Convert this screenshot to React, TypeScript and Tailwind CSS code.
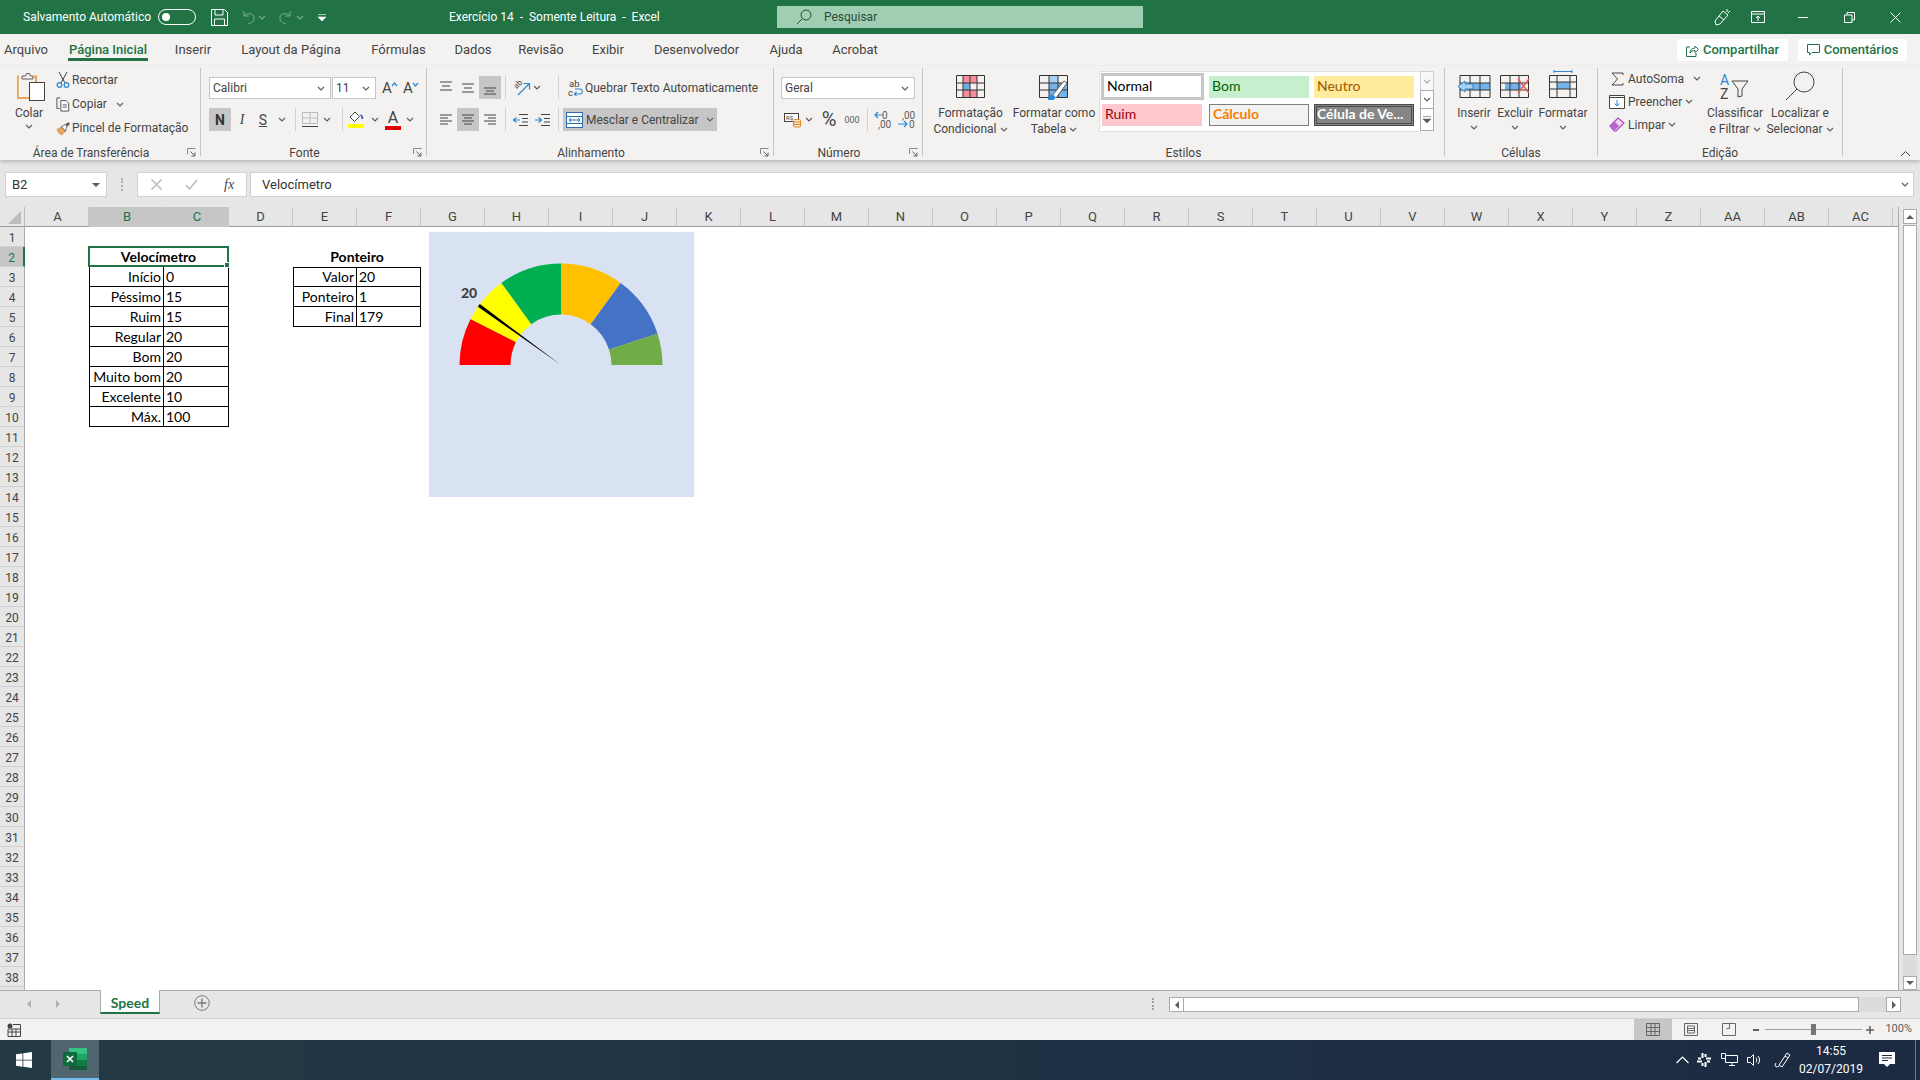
import React from "react";

const columns = ["A","B","C","D","E","F","G","H","I","J","K","L","M","N","O","P","Q","R","S","T","U","V","W","X","Y","Z","AA","AB","AC"];
const rows = Array.from({ length: 38 }, (_, i) => i + 1);

const tabs = [
  { name: "Arquivo", cls: "w-[46px] ml-[3px]" },
  { name: "Página Inicial", cls: "w-[80px] ml-[19px] font-medium text-[#217346] border-b-[3px] border-[#217346]" },
  { name: "Inserir", cls: "w-[36px] ml-[27px]" },
  { name: "Layout da Página", cls: "w-[100px] ml-[30px]" },
  { name: "Fórmulas", cls: "w-[53px] ml-[31px]" },
  { name: "Dados", cls: "w-[38px] ml-[29px]" },
  { name: "Revisão", cls: "w-[44px] ml-[27px]" },
  { name: "Exibir", cls: "w-[32px] ml-[29px]" },
  { name: "Desenvolvedor", cls: "w-[87px] ml-[29px]" },
  { name: "Ajuda", cls: "w-[32px] ml-[30px]" },
  { name: "Acrobat", cls: "w-[46px] ml-[30px]" },
];

const velocimetro = [
  { label: "Início", value: "0", left: "col-start-2 row-start-3", right: "col-start-3 row-start-3" },
  { label: "Péssimo", value: "15", left: "col-start-2 row-start-4", right: "col-start-3 row-start-4" },
  { label: "Ruim", value: "15", left: "col-start-2 row-start-5", right: "col-start-3 row-start-5" },
  { label: "Regular", value: "20", left: "col-start-2 row-start-6", right: "col-start-3 row-start-6" },
  { label: "Bom", value: "20", left: "col-start-2 row-start-7", right: "col-start-3 row-start-7" },
  { label: "Muito bom", value: "20", left: "col-start-2 row-start-8", right: "col-start-3 row-start-8" },
  { label: "Excelente", value: "10", left: "col-start-2 row-start-9", right: "col-start-3 row-start-9" },
  { label: "Máx.", value: "100", left: "col-start-2 row-start-10", right: "col-start-3 row-start-10" },
];

const ponteiro = [
  { label: "Valor", value: "20", left: "col-start-5 row-start-3 border-t pb-px", right: "col-start-6 row-start-3 border-t pb-px" },
  { label: "Ponteiro", value: "1", left: "col-start-5 row-start-4", right: "col-start-6 row-start-4" },
  { label: "Final", value: "179", left: "col-start-5 row-start-5", right: "col-start-6 row-start-5" },
];

const gauge = [
  { from: 0, to: 27, color: "#ff0000" },
  { from: 27, to: 54, color: "#ffff00" },
  { from: 54, to: 90, color: "#00b050" },
  { from: 90, to: 126, color: "#ffc000" },
  { from: 126, to: 162, color: "#4472c4" },
  { from: 162, to: 180, color: "#70ad47" },
];

function slice(from: number, to: number, inner: number, outer: number) {
  const cx = 132;
  const cy = 133;
  const pt = (deg: number, r: number) => {
    const a = (deg * Math.PI) / 180;
    return `${(cx - r * Math.cos(a)).toFixed(2)} ${(cy - r * Math.sin(a)).toFixed(2)}`;
  };
  return `M${pt(from, outer)}A${outer} ${outer} 0 0 1 ${pt(to, outer)}L${pt(to, inner)}A${inner} ${inner} 0 0 0 ${pt(from, inner)}Z`;
}

function Chevron({ color = "#605e5c" }: { color?: string }) {
  return (
    <svg width="8" height="5" viewBox="0 0 8 5" className="shrink-0">
      <path d="M1 1l3 3 3-3" fill="none" stroke={color} strokeWidth="1.2" />
    </svg>
  );
}

function Launcher() {
  return (
    <svg width="9" height="9" viewBox="0 0 9 9">
      <path d="M.5 6V.5H8.5" fill="none" stroke="#8a8886" />
      <path d="M3.5 3.5l4 4M8 4.5V8H4.5" fill="none" stroke="#605e5c" />
    </svg>
  );
}

function Lines({ lines }: { lines: number[][] }) {
  return (
    <svg width="16" height="16" viewBox="0 0 16 16">
      {lines.map((l, i) => (
        <path key={i} d={`M${l[0]} ${l[2]}H${l[1]}`} stroke="#444" strokeWidth="1" />
      ))}
    </svg>
  );
}

function Group({ width, label, launcher, children }: { width: string; label: string; launcher?: boolean; children: React.ReactNode }) {
  return (
    <>
      <div className={`${width} h-[94px] flex flex-col shrink-0`}>
        <div className="h-[78px] flex">{children}</div>
        <div className="h-[16px] pt-px flex items-center">
          <div className={`flex-1 text-center ${launcher ? "pr-[18px]" : ""}`}>{label}</div>
          {launcher && (
            <div className="w-[18px] flex justify-center -ml-[18px]">
              <Launcher />
            </div>
          )}
        </div>
      </div>
      <div className="mt-[2px] h-[88px] w-px bg-[#c8c6c4] shrink-0" />
    </>
  );
}

function Sep() {
  return <div className="w-px h-[23px] bg-[#d2d0ce] shrink-0" />;
}

function PasteIcon() {
  return (
    <svg width="30" height="30" viewBox="0 0 30 30">
      <path d="M2 4.5H0.8V26H12M17 4.5H19V10" fill="none" stroke="#eaa357" strokeWidth="2" />
      <path d="M5 7V4h3.5l1-2.500h3l1 2.500H16v3z" fill="#f3f2f1" stroke="#605e5c" />
      <rect x="12.500" y="10.500" width="15" height="18" fill="#fff" stroke="#444" />
    </svg>
  );
}

function ScissorsIcon() {
  return (
    <svg width="14" height="18" viewBox="0 0 14 18">
      <path d="M3 1l6 11M11 1L5 12" stroke="#444" strokeWidth="1" fill="none" />
      <circle cx="3.500" cy="14" r="2.300" fill="none" stroke="#2b88d8" strokeWidth="1.300" />
      <circle cx="10.500" cy="14" r="2.300" fill="none" stroke="#2b88d8" strokeWidth="1.300" />
    </svg>
  );
}

function CopyIcon() {
  return (
    <svg width="14" height="15" viewBox="0 0 16 16">
      <path d="M5 .5H1v12h3" fill="none" stroke="#444" />
      <path d="M5.500 3.500h6l3 3v9h-9zM7.500 8.500h5M7.500 11h5" fill="#fff" stroke="#444" />
    </svg>
  );
}

function BrushIcon() {
  return (
    <svg width="15" height="15" viewBox="0 0 16 16">
      <path d="M1 9l5-3 4 5-4 4C4 14 2 12 1 9z" fill="#eaa357" stroke="#c97f2c" strokeWidth=".6" />
      <path d="M6 6l4-2.500 1.500 2L10 11z" fill="#fff" stroke="#444" strokeWidth=".8" />
      <path d="M10 4l3-3 2 2-3 3z" fill="#605e5c" />
    </svg>
  );
}

function GrowIcon({ up }: { up: boolean }) {
  return (
    <div className="w-[20px] h-[22px] flex items-center text-[15px] text-[#444]">
      A
      <svg width="7" height="5" viewBox="0 0 7 5" className="ml-[-1px] mb-[8px]">
        <path d={up ? "M1 4l2.500-3L6 4" : "M1 1l2.500 3L6 1"} fill="none" stroke="#2b88d8" strokeWidth="1.200" />
      </svg>
    </div>
  );
}

function BorderIcon() {
  return (
    <svg width="16" height="16" viewBox="0 0 16 16">
      <path d="M.5 .5h15v11H.5zM8 .5v11M.5 6h15" fill="none" stroke="#bdbbb9" />
      <path d="M0 14.500h16" stroke="#444" />
    </svg>
  );
}

function FillIcon() {
  return (
    <svg width="16" height="18" viewBox="0 0 16 18">
      <path d="M7 1l-5 5 4.500 4.500 5-5z" fill="#fff" stroke="#444" />
      <path d="M12.500 4c1.500.5 2 2 1.800 4" fill="none" stroke="#2b579a" strokeWidth="1.600" />
      <rect x="0" y="13" width="16" height="4" fill="#ffff00" />
    </svg>
  );
}

function FontColorIcon() {
  return (
    <div className="w-[16px] h-[20px] flex flex-col items-center">
      <span className="text-[16px] leading-[15px] text-[#444]">A</span>
      <span className="w-[16px] h-[4px] bg-[#e00000] mt-[1px]" />
    </div>
  );
}

function OrientIcon() {
  return (
    <svg width="18" height="18" viewBox="0 0 18 18" className="overflow-visible">
      <text x="1" y="8" fontSize="8" fill="#444" transform="rotate(-45 5 6)">ab</text>
      <path d="M5 16L16 5M10.500 4.500H16.500V10.500" fill="none" stroke="#2b88d8" strokeWidth="1.200" />
    </svg>
  );
}

function WrapIcon() {
  return (
    <svg width="16" height="18" viewBox="0 0 16 18" className="overflow-visible">
      <text x="1" y="8" fontSize="9.500" fill="#444">ab</text>
      <text x="0" y="17" fontSize="9.500" fill="#444">c</text>
      <path d="M7 15h5c3 0 3-5 0-5H7M8.500 13L6.500 15l2 2" fill="none" stroke="#2b88d8" strokeWidth="1.100" />
    </svg>
  );
}

function IndentIcon({ reverse }: { reverse?: boolean }) {
  return (
    <svg width="16" height="14" viewBox="0 0 16 14">
      <path d="M7 1.500h9M10 5.500h6M10 9h6M7 12.500h9" stroke="#444" fill="none" />
      <path d={reverse ? "M1 7h6M4.500 4.500L7.500 7l-3 2.500" : "M2 7h6M4.500 4.500L1.500 7l3 2.500"} stroke="#2b88d8" strokeWidth="1.200" fill="none" />
    </svg>
  );
}

function MergeIcon() {
  return (
    <svg width="17" height="16" viewBox="0 0 17 16">
      <rect x=".5" y=".5" width="16" height="15" fill="#fff" stroke="#2b6cb0" />
      <path d="M.5 4.500h16M.5 11.500h16" stroke="#2b6cb0" />
      <path d="M3 8h11M5 6L3 8l2 2M12 6l2 2-2 2" stroke="#2b6cb0" fill="none" />
    </svg>
  );
}

function AccountingIcon() {
  return (
    <svg width="18" height="17" viewBox="0 0 18 17" className="overflow-visible">
      <rect x=".5" y="2.500" width="14" height="8" fill="#fff" stroke="#444" />
      <text x="2" y="9" fontSize="6" fill="#444">R$</text>
      <rect x="9.500" y="8.500" width="7" height="7.500" rx="1" fill="#fde3c8" stroke="#e8862a" />
      <path d="M9.500 11h7M9.500 13.500h7" stroke="#e8862a" />
    </svg>
  );
}

function DecimalIcon({ more }: { more?: boolean }) {
  return (
    <div className="relative w-[22px] h-[22px] text-[10px] leading-[9px] text-[#605e5c]">
      {more ? (
        <>
          <span className="absolute left-[9px] top-[2px]">0</span>
          <span className="absolute left-[5px] top-[11px]">,00</span>
          <svg width="10" height="10" viewBox="0 0 10 10" className="absolute left-[1px] top-[1px]">
            <path d="M9 5H1M4 2L1 5l3 3" fill="none" stroke="#2b88d8" strokeWidth="1.200" />
          </svg>
        </>
      ) : (
        <>
          <span className="absolute left-[7px] top-[2px]">,00</span>
          <span className="absolute left-[14px] top-[11px]">0</span>
          <svg width="12" height="10" viewBox="0 0 12 10" className="absolute left-[2px] top-[10px]">
            <path d="M1 5h9M7 2l3 3-3 3" fill="none" stroke="#2b88d8" strokeWidth="1.200" />
          </svg>
        </>
      )}
    </div>
  );
}

function CondIcon() {
  return (
    <svg width="29" height="23" viewBox="0 0 29 23">
      <rect x="7" y="1" width="14" height="7" fill="#f58d99" />
      <rect x="7" y="8" width="7" height="7" fill="#6daee8" />
      <rect x="7" y="15" width="14" height="7" fill="#f58d99" />
      <path d="M.5 .5h28v22H.5zM.5 8h28M.5 15h28M7 .5v22M14 .5v22M21 .5v22" fill="none" stroke="#333" />
    </svg>
  );
}

function TableIcon() {
  return (
    <svg width="30" height="26" viewBox="0 0 30 26">
      <rect x="10" y="8" width="19" height="14" fill="#74b3ea" />
      <rect x="10" y="1" width="9" height="7" fill="#a9d0f2" />
      <path d="M.5 .5h28v22H.5zM.5 8h28M.5 15h28M10 .5v22M19 .5v22" fill="none" stroke="#333" />
      <path d="M13 21L25 6l3 2-11 15" fill="#fff" stroke="#605e5c" />
      <path d="M9 25c0-3 2-6 5-5s3 4 0 5z" fill="#2b88d8" />
    </svg>
  );
}

function InsertIcon() {
  return (
    <svg width="33" height="23" viewBox="0 0 33 23">
      <rect x="11" y="8" width="21" height="7" fill="#74b3ea" />
      <path d="M2 .5h30v22H2zM2 8h30M2 15h30M12 .5v22M22 .5v22" fill="none" stroke="#333" />
      <path d="M0 11.500L7 6v3h8v5H7v3z" fill="#a9d0f2" stroke="#2b88d8" />
    </svg>
  );
}

function DeleteIcon() {
  return (
    <svg width="30" height="23" viewBox="0 0 30 23">
      <rect x="5" y="8" width="16" height="7" fill="#74b3ea" />
      <path d="M.5 .5h28v22H.5zM.5 8h28M.5 15h28M10 .5v22M19 .5v22" fill="none" stroke="#333" />
      <path d="M18 4l11 14M29 4L18 18" stroke="#e85c5c" strokeWidth="1.600" />
    </svg>
  );
}

function FormatIcon() {
  return (
    <svg width="28" height="28" viewBox="0 0 28 28">
      <path d="M5 1.500h18M5 0v3M23 0v3" stroke="#2b88d8" fill="none" />
      <rect x="8" y="12" width="13" height="7" fill="#74b3ea" />
      <path d="M.5 5.500h27v22H.5zM.5 12h27M.5 19h27M8 5.500v22M21 5.500v22" fill="none" stroke="#333" />
    </svg>
  );
}

function SortIcon() {
  return (
    <svg width="30" height="28" viewBox="0 0 30 28" className="overflow-visible">
      <text x="0" y="13" fontSize="14" fill="#2b88d8">A</text>
      <text x="0" y="27" fontSize="14" fill="#444">Z</text>
      <path d="M12 9h16l-6 8v7l-4 1v-8z" fill="none" stroke="#444" />
    </svg>
  );
}

function FindIcon() {
  return (
    <svg width="30" height="30" viewBox="0 0 30 30">
      <circle cx="19" cy="11" r="10" fill="none" stroke="#444" />
      <path d="M12 18L1 29" stroke="#444" />
    </svg>
  );
}

function LargeButton({ width, pt, icon, children }: { width: string; pt: string; icon: React.ReactNode; children: React.ReactNode }) {
  return (
    <div className={`${width} ${pt} flex flex-col items-center shrink-0`}>
      {icon}
      {children}
    </div>
  );
}

function StyleCell({ cls, children }: { cls: string; children: React.ReactNode }) {
  return <div className={`flex items-center pl-[3px] text-[14px] overflow-hidden whitespace-nowrap [font-family:Lato,sans-serif] ${cls}`}>{children}</div>;
}

function Cell({ cls, children }: { cls: string; children: React.ReactNode }) {
  return <div className={`flex items-center border-black whitespace-nowrap ${cls}`}>{children}</div>;
}

function ScrollButton({ cls, children }: { cls: string; children?: React.ReactNode }) {
  return <div className={`flex items-center justify-center bg-white border border-[#ababab] ${cls}`}>{children}</div>;
}

function Triangle({ dir }: { dir: "up" | "down" | "left" | "right" }) {
  const d = { up: "M0 5l4-4 4 4z", down: "M0 1l4 4 4-4z", left: "M5 0L1 4l4 4z", right: "M1 0l4 4-4 4z" }[dir];
  return (
    <svg width={dir === "up" || dir === "down" ? 8 : 6} height={dir === "up" || dir === "down" ? 6 : 8} viewBox={dir === "up" || dir === "down" ? "0 0 8 6" : "0 0 6 8"}>
      <path d={d} fill="#605e5c" />
    </svg>
  );
}

function TitleBar() {
  return (
    <div className="h-[34px] shrink-0 bg-[#217346] flex items-center text-white text-[12px]">
      <div className="ml-[23px] w-[135px]">Salvamento Automático</div>
      <div className="w-[38px] h-[16px] rounded-full border border-white flex items-center pl-[3px]">
        <div className="w-[8px] h-[8px] rounded-full bg-white" />
      </div>
      <svg width="17" height="17" viewBox="0 0 17 17" className="ml-[15px]">
        <path d="M.5 .5h13l3 3v13H.5zM4 .5V6h8V.5M3.500 16.500V10h10v6.500" fill="none" stroke="#fff" />
      </svg>
      <svg width="16" height="15" viewBox="0 0 16 15" className="ml-[12px] opacity-40">
        <path d="M4 1v5h5M4 6c3-4 11-3 10 3-.5 3-3 4-6 5" fill="none" stroke="#fff" />
      </svg>
      <div className="ml-[2px] opacity-40"><Chevron color="#fff" /></div>
      <svg width="16" height="15" viewBox="0 0 16 15" className="ml-[12px] opacity-40">
        <path d="M12 1v5H7M12 6C9 2 1 3 2 9c.5 3 3 4 6 5" fill="none" stroke="#fff" />
      </svg>
      <div className="ml-[2px] opacity-40"><Chevron color="#fff" /></div>
      <svg width="8" height="9" viewBox="0 0 8 9" className="ml-[14px]">
        <path d="M0 1.500h8M0 4l4 4 4-4z" fill="#fff" stroke="#fff" strokeWidth=".6" />
      </svg>
      <div className="w-[209px] ml-[123px] whitespace-pre text-center">Exercício 14  -  Somente Leitura  -  Excel</div>
      <div className="ml-[119px] w-[366px] h-[22px] bg-[#9fceb2] flex items-center text-[#2d4a3a]">
        <svg width="16" height="16" viewBox="0 0 16 16" className="ml-[19px]">
          <circle cx="10" cy="6" r="5" fill="none" stroke="#2d4a3a" />
          <path d="M6.500 9.500L1 15" stroke="#2d4a3a" />
        </svg>
        <span className="ml-[12px]">Pesquisar</span>
      </div>
      <svg width="18" height="18" viewBox="0 0 18 18" className="ml-[570px]">
        <path d="M2 13L10 3l5 4-8 9-4 1zM6 8l5 4M14 1v3M17 3l-2 2" fill="none" stroke="#fff" />
      </svg>
      <svg width="14" height="12" viewBox="0 0 14 12" className="ml-[20px]">
        <path d="M.5 .5h13v11H.5zM.5 3h13M7 10V5M5 7l2-2 2 2" fill="none" stroke="#fff" />
      </svg>
      <div className="ml-[33px] w-[10px] h-px bg-white" />
      <svg width="11" height="11" viewBox="0 0 11 11" className="ml-[36px]">
        <path d="M.5 3h7.500v7.500H.5zM3 3V.5h7.500V8H8" fill="none" stroke="#fff" />
      </svg>
      <svg width="11" height="11" viewBox="0 0 11 11" className="ml-[35px]">
        <path d="M.5 .5l10 10M10.500 .5l-10 10" stroke="#fff" />
      </svg>
    </div>
  );
}

function TabsRow() {
  return (
    <div className="h-[32px] shrink-0 bg-[#f3f2f1] flex items-center text-[13px] text-[#444]">
      {tabs.map((t) => (
        <div key={t.name} className={`h-[22px] flex items-start justify-center whitespace-nowrap leading-[22px] ${t.cls}`}>
          {t.name}
        </div>
      ))}
      <div className="flex-1" />
      <div className="w-[111px] h-[22px] bg-white flex items-center justify-center gap-[4px] text-[13px] font-medium text-[#217346] rounded-[2px]">
        <svg width="13" height="13" viewBox="0 0 13 13">
          <path d="M4 3H.5v9.500h9.500V9M4 9c0-3 2-5 5-5V2l3.500 3.500L9 8.500V6.500C7 6.500 5 7 4 9z" fill="none" stroke="#217346" />
        </svg>
        Compartilhar
      </div>
      <div className="ml-[10px] mr-[13px] w-[109px] h-[22px] bg-white flex items-center justify-center gap-[4px] text-[13px] font-medium text-[#217346] rounded-[2px]">
        <svg width="13" height="12" viewBox="0 0 13 12">
          <path d="M.5 .5h12v8H5L2.500 11V8.500h-2z" fill="none" stroke="#217346" />
        </svg>
        Comentários
      </div>
    </div>
  );
}

function Ribbon() {
  return (
    <div className="relative z-10 h-[94px] shrink-0 bg-[#f3f2f1] flex text-[12px] leading-[16px] text-[#444] shadow-[0_2px_4px_rgba(0,0,0,0.2)]">
      <Group width="w-[200px]" label="Área de Transferência" launcher>
        <LargeButton width="w-[58px]" pt="pt-[6px]" icon={<div className="ml-[5px]"><PasteIcon /></div>}>
          <div className="mt-[3px]">Colar</div>
          <div className="mt-[3px]"><Chevron /></div>
        </LargeButton>
        <div className="-ml-[2px] pt-[2px] flex flex-col">
          <div className="h-[24px] flex items-center">
            <div className="w-[16px]"><ScissorsIcon /></div>Recortar
          </div>
          <div className="h-[24px] flex items-center">
            <div className="w-[16px]"><CopyIcon /></div>Copiar
            <div className="ml-[9px]"><Chevron /></div>
          </div>
          <div className="h-[24px] flex items-center whitespace-nowrap">
            <div className="w-[16px]"><BrushIcon /></div>Pincel de Formatação
          </div>
        </div>
      </Group>

      <Group width="w-[225px]" label="Fonte" launcher>
        <div className="pl-[8px] pt-[11px] flex flex-col">
          <div className="h-[22px] flex items-center">
            <div className="w-[122px] h-[22px] bg-white border border-[#c8c6c4] flex items-center justify-between pl-[3px] pr-[5px]">
              Calibri <Chevron />
            </div>
            <div className="w-[44px] ml-px h-[22px] bg-white border border-[#c8c6c4] flex items-center justify-between pl-[3px] pr-[5px]">
              11 <Chevron />
            </div>
            <div className="ml-[6px] w-[21px]"><GrowIcon up /></div>
            <div className="w-[20px]"><GrowIcon up={false} /></div>
          </div>
          <div className="mt-[9px] h-[23px] flex items-center">
            <div className="w-[22px] h-[23px] bg-[#c6c6c6] flex items-center justify-center font-bold text-[14px] text-[#333]">N</div>
            <div className="w-[22px] text-center italic text-[14px] [font-family:'Liberation_Serif',serif]">I</div>
            <div className="ml-[2px] w-[16px] text-center underline text-[14px]">S</div>
            <div className="w-[22px] flex justify-center"><Chevron /></div>
            <div className="ml-[2px]"><Sep /></div>
            <div className="ml-[6px] w-[16px]"><BorderIcon /></div>
            <div className="w-[18px] flex justify-center"><Chevron /></div>
            <div className="ml-[6px]"><Sep /></div>
            <div className="ml-[5px] w-[16px]"><FillIcon /></div>
            <div className="w-[21px] flex justify-center"><Chevron /></div>
            <FontColorIcon />
            <div className="w-[18px] flex justify-center"><Chevron /></div>
          </div>
        </div>
      </Group>

      <Group width="w-[346px]" label="Alinhamento" launcher>
        <div className="pl-[8px] pt-[10px] flex flex-col">
          <div className="h-[23px] flex items-center">
            <div className="w-[22px] h-[23px] flex items-center justify-center"><Lines lines={[[2, 14, 2], [4, 12, 6], [2, 14, 10]]} /></div>
            <div className="w-[22px] h-[23px] flex items-center justify-center"><Lines lines={[[2, 14, 4], [4, 12, 8], [2, 14, 12]]} /></div>
            <div className="w-[22px] h-[23px] bg-[#c6c6c6] flex items-center justify-center"><Lines lines={[[2, 14, 8], [4, 12, 11], [2, 14, 14]]} /></div>
            <div className="ml-[4px]"><Sep /></div>
            <div className="ml-[4px] w-[24px] flex justify-center"><OrientIcon /></div>
            <div className="w-[6px] flex justify-center"><Chevron /></div>
            <div className="ml-[18px]"><Sep /></div>
            <div className="ml-[9px] w-[17px]"><WrapIcon /></div>
            <div className="whitespace-nowrap">Quebrar Texto Automaticamente</div>
          </div>
          <div className="mt-[9px] h-[23px] flex items-center">
            <div className="w-[22px] h-[23px] flex items-center justify-center"><Lines lines={[[2, 14, 3], [2, 10, 6], [2, 14, 9], [2, 10, 12]]} /></div>
            <div className="w-[22px] h-[23px] bg-[#c6c6c6] flex items-center justify-center"><Lines lines={[[2, 14, 3], [4, 12, 6], [2, 14, 9], [4, 12, 12]]} /></div>
            <div className="w-[22px] h-[23px] flex items-center justify-center"><Lines lines={[[2, 14, 3], [6, 14, 6], [2, 14, 9], [6, 14, 12]]} /></div>
            <div className="ml-[4px]"><Sep /></div>
            <div className="ml-[3px] w-[22px] flex justify-center"><IndentIcon /></div>
            <div className="w-[22px] flex justify-center"><IndentIcon reverse /></div>
            <div className="ml-[5px]"><Sep /></div>
            <div className="ml-[4px] w-[154px] h-[23px] bg-[#c6c6c6] flex items-center pl-[3px] whitespace-nowrap">
              <MergeIcon />
              <span className="ml-[3px]">Mesclar e Centralizar</span>
              <div className="ml-[7px]"><Chevron /></div>
            </div>
          </div>
        </div>
      </Group>

      <Group width="w-[148px]" label="Número" launcher>
        <div className="pl-[7px] pt-[11px] flex flex-col">
          <div className="w-[134px] h-[22px] bg-white border border-[#c8c6c4] flex items-center justify-between pl-[3px] pr-[5px]">
            Geral <Chevron />
          </div>
          <div className="mt-[9px] h-[23px] flex items-center">
            <div className="ml-[3px] w-[18px]"><AccountingIcon /></div>
            <div className="w-[14px] flex justify-center"><Chevron /></div>
            <div className="w-[26px] text-center text-[20px] leading-[23px] text-[#444]">%</div>
            <div className="w-[20px] text-center text-[9px] text-[#605e5c]">000</div>
            <div className="ml-[5px]"><Sep /></div>
            <div className="ml-[5px]"><DecimalIcon more /></div>
            <DecimalIcon />
          </div>
        </div>
      </Group>

      <Group width="w-[521px]" label="Estilos">
        <div className="ml-[6px] flex">
          <LargeButton width="w-[83px]" pt="pt-[9px]" icon={<CondIcon />}>
            <div className="mt-[7px] whitespace-nowrap">Formatação</div>
            <div className="flex items-center gap-[3px] whitespace-nowrap">Condicional <Chevron /></div>
          </LargeButton>
          <LargeButton width="w-[84px]" pt="pt-[9px]" icon={<TableIcon />}>
            <div className="mt-[4px] whitespace-nowrap">Formatar como</div>
            <div className="flex items-center gap-[3px] whitespace-nowrap">Tabela <Chevron /></div>
          </LargeButton>
        </div>
        <div className="ml-[3px] mt-[5px] w-[321px] h-[61px] bg-white border-y border-l border-[#e1dfdd] pl-[1px] pt-[1px] grid grid-cols-[103px_100px_100px] grid-rows-[27px_22px] gap-x-[5px] gap-y-[4px]">
          <StyleCell cls="pb-px border-[3px] border-[#c6c6c6] bg-white text-black">Normal</StyleCell>
          <StyleCell cls="pb-px self-center h-[22px] bg-[#c6efce] text-[#006100]">Bom</StyleCell>
          <StyleCell cls="pb-px self-center h-[22px] bg-[#ffeb9c] text-[#9c5700]">Neutro</StyleCell>
          <StyleCell cls="pb-[2px] ml-[1px] w-[100px] bg-[#ffc7ce] text-[#9c0006]">Ruim</StyleCell>
          <StyleCell cls="pb-[2px] bg-[#f2f2f2] border border-[#7f7f7f] text-[#fa7d00] font-bold">Cálculo</StyleCell>
          <StyleCell cls="pb-[2px] bg-[#868686] border-[3px] border-double border-[#4a4a4a] text-white font-bold !pl-0">Célula de Ve...</StyleCell>
        </div>
        <div className="mt-[5px] w-[14px] h-[61px] flex flex-col">
          <ScrollButton cls="h-[20px] opacity-50"><Chevron /></ScrollButton>
          <ScrollButton cls="h-[19px] -mt-px"><Chevron /></ScrollButton>
          <ScrollButton cls="h-[23px] -mt-px">
            <svg width="8" height="9" viewBox="0 0 8 9"><path d="M0 1.500h8M0 4l4 4 4-4z" fill="#605e5c" stroke="#605e5c" strokeWidth=".6" /></svg>
          </ScrollButton>
        </div>
      </Group>

      <Group width="w-[152px]" label="Células">
        <div className="ml-[7px] flex">
          <LargeButton width="w-[44px]" pt="pt-[9px]" icon={<InsertIcon />}>
            <div className="mt-[7px]">Inserir</div>
            <div className="mt-[4px]"><Chevron /></div>
          </LargeButton>
          <LargeButton width="w-[38px]" pt="pt-[9px]" icon={<DeleteIcon />}>
            <div className="mt-[7px]">Excluir</div>
            <div className="mt-[4px]"><Chevron /></div>
          </LargeButton>
          <LargeButton width="w-[58px]" pt="pt-[4px]" icon={<FormatIcon />}>
            <div className="mt-[7px]">Formatar</div>
            <div className="mt-[4px]"><Chevron /></div>
          </LargeButton>
        </div>
      </Group>

      <Group width="w-[244px]" label="Edição">
        <div className="ml-[11px] w-[95px] pt-[1px] flex flex-col shrink-0">
          <div className="h-[23px] flex items-center whitespace-nowrap">
            <svg width="19" height="14" viewBox="0 0 19 14" className="shrink-0">
              <path d="M13 3V1H2l5.500 6L2 13h11v-2" fill="none" stroke="#444" transform="translate(1 0)" />
            </svg>
            AutoSoma
            <div className="ml-[9px]"><Chevron /></div>
          </div>
          <div className="h-[23px] flex items-center whitespace-nowrap">
            <svg width="19" height="14" viewBox="0 0 19 14" className="shrink-0">
              <path d="M.5 .5h15v13H.5zM.5 2.500h15" fill="#fff" stroke="#444" />
              <path d="M8 5v6M5.500 8.500L8 11l2.500-2.500" fill="none" stroke="#2b88d8" />
            </svg>
            Preencher
            <div className="ml-[3px]"><Chevron /></div>
          </div>
          <div className="h-[23px] flex items-center whitespace-nowrap">
            <svg width="19" height="16" viewBox="0 0 19 16" className="shrink-0">
              <path d="M1 9l8-8 6 5-8 8H5z" fill="#f3d5f5" stroke="#a64dbf" strokeWidth="1.200" />
              <path d="M1 9l4 5 5-5-4-4z" fill="#b565c9" />
            </svg>
            Limpar
            <div className="ml-[3px]"><Chevron /></div>
          </div>
        </div>
        <LargeButton width="w-[62px]" pt="pt-[6px]" icon={<SortIcon />}>
          <div className="mt-[5px] whitespace-nowrap">Classificar</div>
          <div className="flex items-center gap-[3px] whitespace-nowrap">e Filtrar <Chevron /></div>
        </LargeButton>
        <LargeButton width="w-[68px]" pt="pt-[5px]" icon={<FindIcon />}>
          <div className="mt-[4px] whitespace-nowrap">Localizar e</div>
          <div className="flex items-center gap-[3px] whitespace-nowrap">Selecionar <Chevron /></div>
        </LargeButton>
      </Group>

      <div className="flex-1 flex items-end justify-end pr-[9px] pb-[3px]">
        <svg width="11" height="7" viewBox="0 0 11 7"><path d="M1 6l4.500-4.500L10 6" fill="none" stroke="#444" /></svg>
      </div>
    </div>
  );
}

function FormulaBar() {
  return (
    <div className="h-[47px] shrink-0 bg-[#e6e6e6] flex pt-[12px] text-[13px] text-[#333]">
      <div className="ml-[5px] w-[102px] h-[25px] bg-white border border-[#d2d0ce] flex items-center justify-between pl-[6px] pr-[6px]">
        B2 <Triangle dir="down" />
      </div>
      <div className="ml-[14px] w-[3px] h-[13px] mt-[6px] border-l-2 border-dotted border-[#b0aeac]" />
      <div className="ml-[13px] w-[110px] h-[25px] bg-white border border-[#d2d0ce] flex items-center">
        <svg width="11" height="11" viewBox="0 0 11 11" className="ml-[13px]"><path d="M.5 .5l10 10M10.500 .5l-10 10" stroke="#bdbbb9" strokeWidth="1.500" /></svg>
        <svg width="13" height="11" viewBox="0 0 13 11" className="ml-[23px]"><path d="M1 6l3.500 4L12 1" fill="none" stroke="#bdbbb9" strokeWidth="1.500" /></svg>
        <span className="ml-[26px] italic text-[14px] text-[#444] [font-family:'Liberation_Serif',serif]">fx</span>
      </div>
      <div className="ml-[3px] w-[1664px] h-[25px] bg-white border border-[#d2d0ce] flex items-center justify-between pl-[11px] pr-[4px]">
        Velocímetro
        <Chevron />
      </div>
    </div>
  );
}

function Sheet() {
  return (
    <div className="flex-1 min-h-0 flex bg-[#e6e6e6]">
      <div className="w-[1899px] flex flex-col border-r border-[#ababab] overflow-hidden">
        <div className="h-[20px] shrink-0 flex bg-[#e6e6e6] border-b border-[#9c9c9c] text-[13px] text-[#444]">
          <div className="w-[25px] shrink-0 border-r border-[#bdbdbd] flex items-end justify-end pr-[3px] pb-[2px]">
            <svg width="13" height="13" viewBox="0 0 13 13"><path d="M13 0v13H0z" fill="#bdbdbd" /></svg>
          </div>
          {columns.map((c, i) => {
            let cls = "w-[64px] text-[#444]";
            if (c === "A") cls = "w-[64px] text-[#444] pl-[2px]";
            if (c === "B") cls = "w-[75px] bg-[#c6c6c6] text-[#217346] border-b-2 border-[#217346] h-[20px] pl-[2px]";
            if (c === "C") cls = "w-[65px] bg-[#c6c6c6] text-[#217346] border-b-2 border-[#217346] h-[20px] pl-[2px]";
            return (
              <div key={i} className={`${cls} shrink-0 flex items-center justify-center pt-px border-r border-[#c8c8c8]`}>
                {c}
              </div>
            );
          })}
        </div>
        <div className="flex-1 min-h-0 flex bg-white">
          <div className="w-[25px] shrink-0 flex flex-col bg-[#e6e6e6] border-r border-[#ababab] text-[12px] text-[#444]">
            {rows.map((r) => (
              <div
                key={r}
                className={`h-[20px] shrink-0 flex items-center justify-center pt-[2px] border-b border-[#d0d0d0] ${r === 2 ? "bg-[#c6c6c6] text-[#217346] -mr-px border-r-2 border-r-[#217346]" : ""}`}
              >
                {r}
              </div>
            ))}
          </div>
          <div className="relative grid grid-cols-[64px_75px_65px_64px_repeat(25,64px)] grid-rows-[repeat(38,20px)] text-[14px] leading-[19px] text-black [font-family:Lato,sans-serif]">
            <div className="relative col-start-2 col-span-2 row-start-2 -mt-px -ml-px flex items-center justify-center border-2 border-[#217346] font-bold">
              Velocímetro
              <span className="absolute -right-[3px] -bottom-[3px] w-[6px] h-[6px] bg-[#217346] border border-white" />
            </div>
            {velocimetro.map((r) => (
              <React.Fragment key={r.label}>
                <Cell cls={`${r.left} border-l border-r border-b justify-end pr-[2px]`}>{r.label}</Cell>
                <Cell cls={`${r.right} border-r border-b pl-[2px]`}>{r.value}</Cell>
              </React.Fragment>
            ))}
            <div className="col-start-5 col-span-2 row-start-2 flex items-center justify-center pb-[2px] font-bold">Ponteiro</div>
            {ponteiro.map((r) => (
              <React.Fragment key={r.label}>
                <Cell cls={`${r.left} border-l border-r border-b justify-end pr-[2px]`}>{r.label}</Cell>
                <Cell cls={`${r.right} border-r border-b pl-[2px]`}>{r.value}</Cell>
              </React.Fragment>
            ))}
            <div className="absolute left-[404px] top-[5px] w-[265px] h-[265px] bg-[#d9e2f3]">
              <svg width="265" height="265" viewBox="0 0 265 265">
                {gauge.map((g) => (
                  <path key={g.from} d={slice(g.from, g.to, 50.5, 101.5)} fill={g.color} />
                ))}
                <path d={slice(35.1, 36.9, 0, 101.5)} fill="#000" />
                <text x="32" y="66" fontSize="14" fontWeight="900" fill="#404040" style={{ fontFamily: "Lato, sans-serif" }}>20</text>
              </svg>
            </div>
          </div>
        </div>
      </div>
      <div className="flex-1 flex flex-col pl-[4px] pr-[3px] pt-[2px]">
        <ScrollButton cls="h-[15px] shrink-0"><Triangle dir="up" /></ScrollButton>
        <div className="mt-px h-[730px] shrink-0 bg-white border border-[#ababab]" />
        <div className="flex-1 bg-[#dcdcdc]" />
        <ScrollButton cls="h-[14px] shrink-0"><Triangle dir="down" /></ScrollButton>
      </div>
    </div>
  );
}

function SheetTabs() {
  return (
    <div className="h-[28px] shrink-0 bg-[#e6e6e6] border-t border-[#ababab] flex items-start">
      <div className="ml-[26px] mt-[9px] opacity-40"><Triangle dir="left" /></div>
      <div className="ml-[23px] mt-[9px] opacity-40"><Triangle dir="right" /></div>
      <div className="ml-[39px] -mt-px w-[60px] h-[24px] bg-white border-x border-[#ababab] border-b-2 border-b-[#217346] flex items-center justify-center pt-[2px] text-[14px] font-bold text-[#217346] [font-family:Lato,sans-serif]">
        Speed
      </div>
      <svg width="16" height="16" viewBox="0 0 16 16" className="ml-[34px] mt-[4px]">
        <circle cx="8" cy="8" r="7.300" fill="none" stroke="#7a7a7a" />
        <path d="M3.500 8h9M8 3.500v9" stroke="#7a7a7a" strokeWidth="1.400" />
      </svg>
      <div className="ml-[942px] mt-[7px] w-[2px] h-[12px] border-l-2 border-dotted border-[#a0a0a0]" />
      <div className="ml-[15px] mt-[6px] h-[15px] flex">
        <div className="w-[15px] bg-white border border-[#ababab] flex items-center justify-center"><Triangle dir="left" /></div>
        <div className="w-[675px] bg-white border-y border-r border-[#ababab]" />
        <div className="w-[27px] bg-[#dcdcdc]" />
        <div className="w-[15px] bg-white border border-[#ababab] flex items-center justify-center"><Triangle dir="right" /></div>
      </div>
    </div>
  );
}

function StatusBar() {
  return (
    <div className="h-[22px] shrink-0 bg-[#f3f2f1] border-t border-[#d2d0ce] flex items-center text-[12px] text-[#605e5c]">
      <svg width="14" height="14" viewBox="0 0 14 14" className="ml-[7px]">
        <circle cx="3" cy="3" r="2.500" fill="#444" />
        <path d="M6 1.500h7.500v12H1V6h12.500M1 9h12.500M5 6v7.500M9 6v7.500" fill="none" stroke="#444" />
      </svg>
      <div className="flex-1" />
      <div className="w-[38px] h-[21px] bg-[#c6c6c6] flex items-center justify-center">
        <svg width="14" height="13" viewBox="0 0 14 13"><path d="M.5 .5h13v12H.5zM.5 4.500h13M.5 8.500h13M5 .5v12M9 .5v12" fill="none" stroke="#666" /></svg>
      </div>
      <svg width="14" height="13" viewBox="0 0 14 13" className="ml-[12px]"><path d="M.5 .5h13v12H.5zM3.500 3h7v7h-7zM3.500 5.500h7M3.500 7.500h7" fill="none" stroke="#666" /></svg>
      <svg width="14" height="13" viewBox="0 0 14 13" className="ml-[24px]"><path d="M.5 .5h13v12H.5zM7.500 .5v5h-3" fill="none" stroke="#666" /></svg>
      <div className="ml-[17px] w-[6px] h-[2px] bg-[#605e5c]" />
      <div className="ml-[6px] w-[97px] h-px bg-[#a0a0a0] flex justify-center">
        <div className="-mt-[5px] w-[5px] h-[11px] bg-[#757575]" />
      </div>
      <svg width="8" height="8" viewBox="0 0 8 8" className="ml-[4px]"><path d="M0 4h8M4 0v8" stroke="#605e5c" strokeWidth="1.500" /></svg>
      <div className="ml-[11px] mr-[8px] text-[11px]">100%</div>
    </div>
  );
}

function Taskbar() {
  return (
    <div className="h-[40px] shrink-0 flex items-stretch text-white text-[12px] bg-gradient-to-r from-[#233a45] to-[#1c2a42]">
      <div className="w-[51px] pr-[4px] flex items-center justify-center">
        <svg width="16" height="16" viewBox="0 0 16 16"><path d="M0 2.300l6.500-.9v6.300H0zM7.300 1.300L16 0v7.700H7.300zM0 8.400h6.500v6.300L0 13.800zM7.300 8.400H16V16l-8.700-1.200z" fill="#fff" /></svg>
      </div>
      <div className="w-[48px] bg-[#4f6570] border-b-2 border-[#76b9ed] flex items-center justify-center">
        <svg width="24" height="22" viewBox="0 0 24 22">
          <rect x="6" y="0" width="18" height="6" fill="#33c481" />
          <rect x="6" y="6" width="18" height="6" fill="#21a366" />
          <rect x="6" y="12" width="18" height="6" fill="#107c41" />
          <rect x="6" y="18" width="18" height="4" fill="#185c37" />
          <rect x="0" y="4" width="14" height="14" rx="1" fill="#0f6b39" />
          <path d="M4 8l6 6M10 8l-6 6" stroke="#fff" strokeWidth="1.600" />
        </svg>
      </div>
      <div className="flex-1" />
      <div className="flex items-center">
        <svg width="13" height="8" viewBox="0 0 13 8"><path d="M.5 7l6-6 6 6" fill="none" stroke="#fff" strokeWidth="1.200" /></svg>
        <svg width="14" height="14" viewBox="0 0 14 14" className="ml-[8px]">
          <path d="M5.500 0v5M8.500 9v5M0 8.500h5M9 5.500h5M1 5.500h3M10 8.500h3M5.500 10v3M8.500 1v3" stroke="#fff" strokeWidth="2" />
        </svg>
        <svg width="17" height="14" viewBox="0 0 17 14" className="ml-[10px]">
          <path d="M.5 .5h4v5h-4zM4.500 2.500h12v7h-12zM4.500 9.500V5M8 12.500h6M11 9.500v3" fill="none" stroke="#fff" />
        </svg>
        <svg width="15" height="14" viewBox="0 0 15 14" className="ml-[9px]">
          <path d="M.5 4.500h3l3-3v11l-3-3h-3zM9 4.500c1 1.500 1 3.500 0 5M11 3c2 2.500 2 5.500 0 8" fill="none" stroke="#fff" />
        </svg>
        <svg width="17" height="18" viewBox="0 0 17 18" className="ml-[12px]">
          <path d="M5 15c-3 2-5 0-3-3M5 14L13 2l3 2-8 12zM11 5l3 2" fill="none" stroke="#fff" />
        </svg>
        <div className="ml-[10px] w-[60px] flex flex-col items-center leading-[18px]">
          <div>14:55</div>
          <div>02/07/2019</div>
        </div>
        <svg width="16" height="16" viewBox="0 0 16 16" className="ml-[18px]">
          <path d="M0 0h16v12h-5l-3 3-3-3H0z" fill="#fff" />
          <path d="M3 3.500h10M3 6h10M3 8.500h6" stroke="#1c2a42" />
        </svg>
        <div className="ml-[20px] mr-[4px] w-px h-full bg-[#6b7a90]" />
      </div>
    </div>
  );
}

export default function App() {
  return (
    <div className="w-screen h-screen flex flex-col overflow-hidden [font-family:Roboto,sans-serif]">
      <TitleBar />
      <TabsRow />
      <Ribbon />
      <FormulaBar />
      <Sheet />
      <SheetTabs />
      <StatusBar />
      <Taskbar />
    </div>
  );
}
